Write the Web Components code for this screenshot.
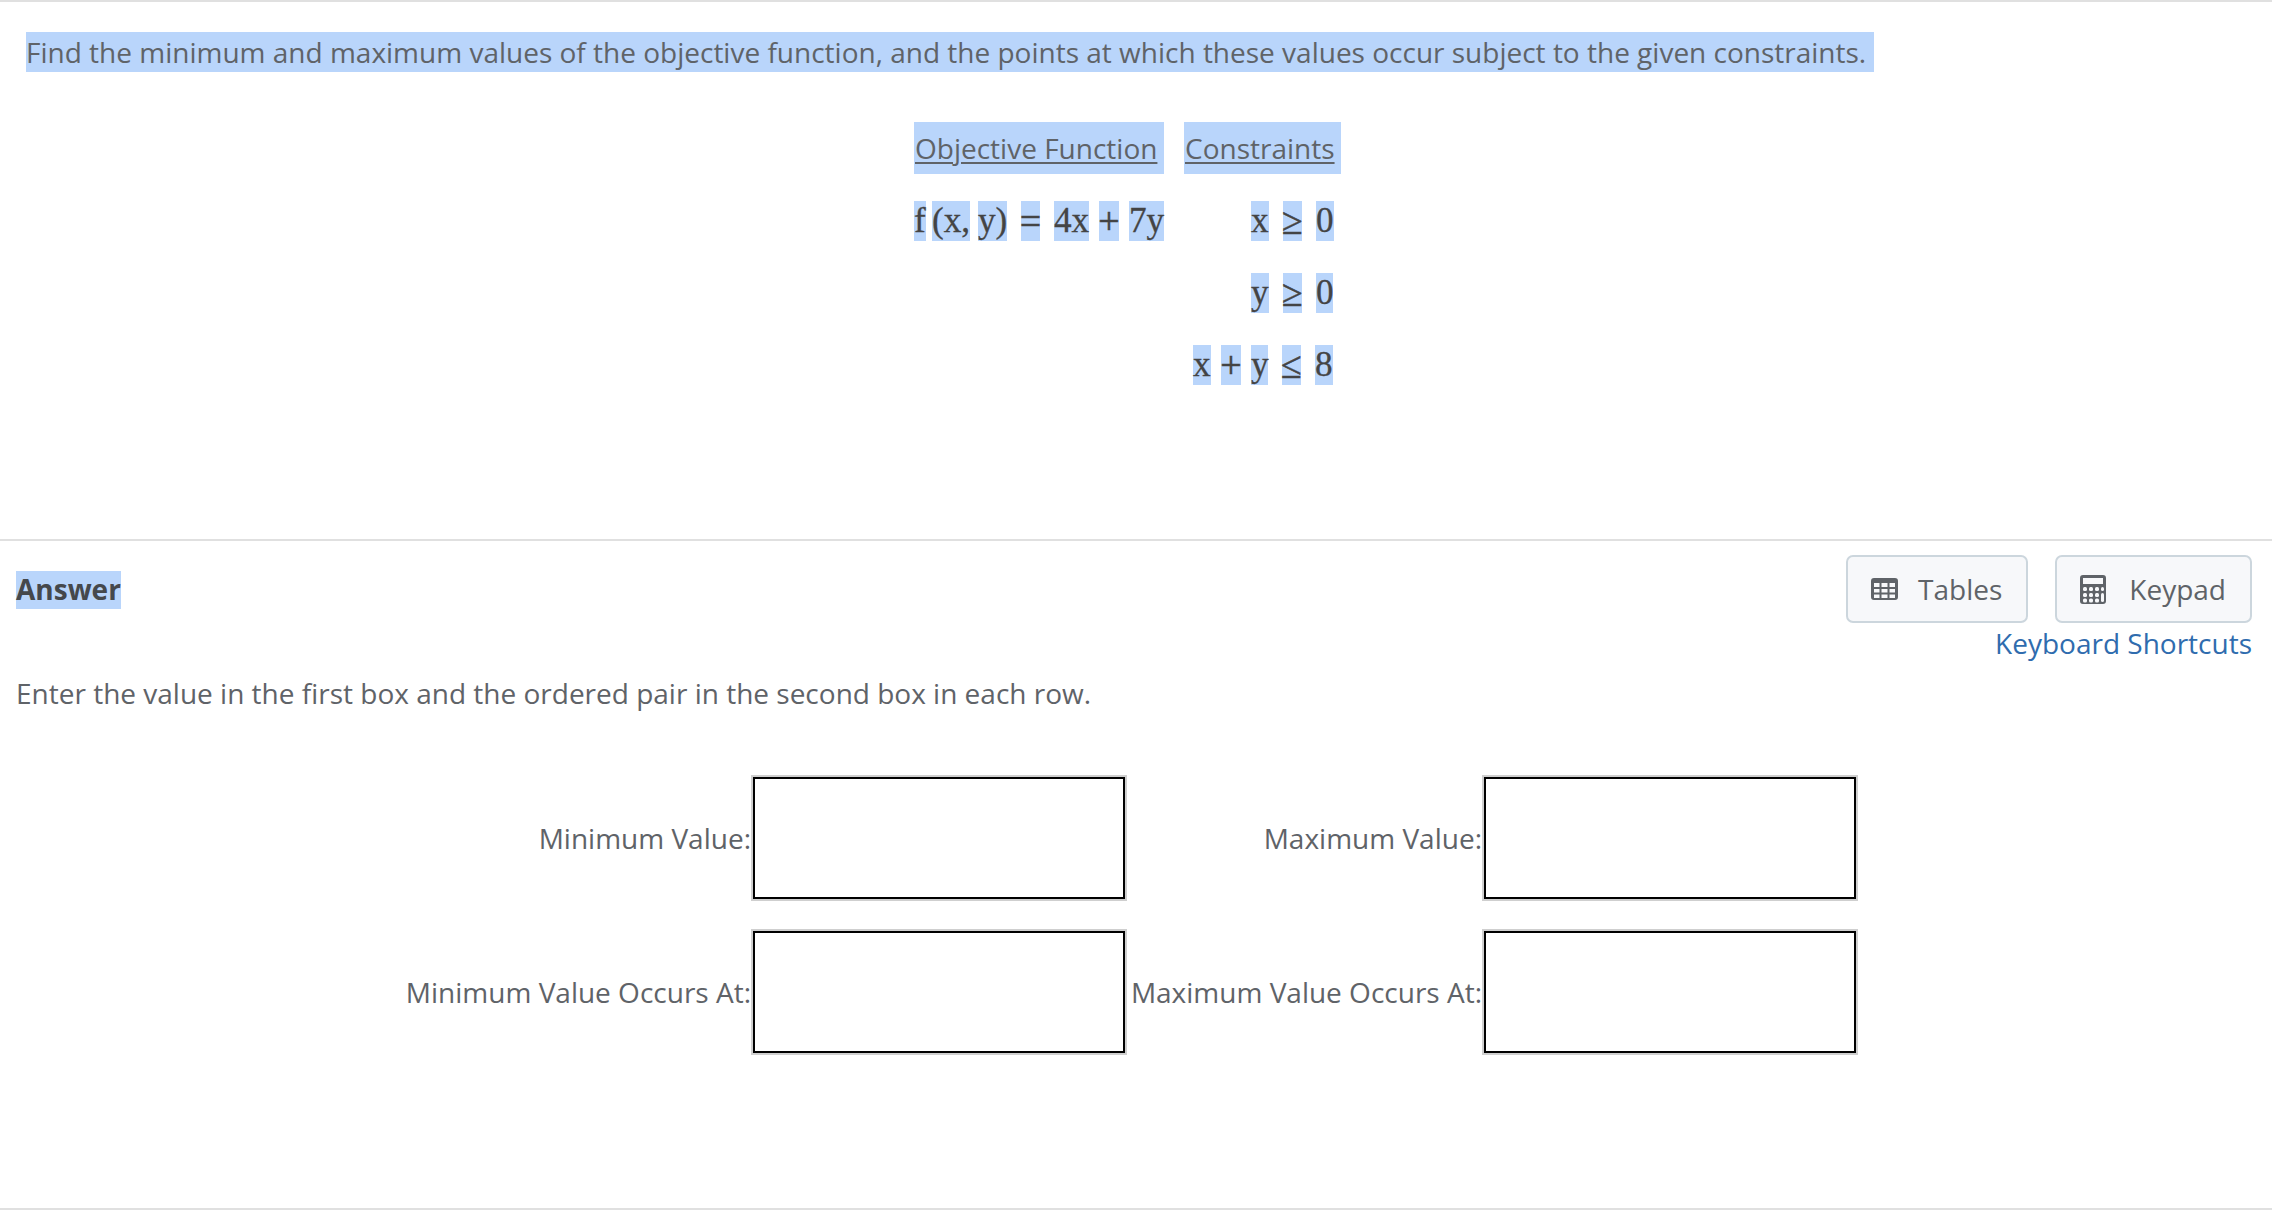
<!DOCTYPE html>
<html lang="en">
<head>
<meta charset="utf-8">
<title>Objective function</title>
<style>
  html, body { margin: 0; background: #fff; }
  body { font: 28px/40px "Open Sans", sans-serif; color: #5f6368; }
</style>
</head>
<body>
<quiz-page>
  <quiz-section slot="question">
    <sel-text>Find the minimum and maximum values of the objective function, and the points at which these values occur subject to the given constraints.&nbsp;</sel-text>
    <math-table>
      <table-head style="width:250px">Objective Function</table-head>
      <table-head style="width:157px">Constraints</table-head>
      <math-row>
        <math-token data-w="12">f</math-token>
        <math-token data-w="38" data-gap="6">(x,</math-token>
        <math-token data-w="29" data-gap="8">y)</math-token>
        <math-token data-w="19" data-gap="14" data-op>=</math-token>
        <math-token data-w="35" data-gap="14">4x</math-token>
        <math-token data-w="20" data-gap="10" data-op>+</math-token>
        <math-token data-w="35" data-gap="10">7y</math-token>
      </math-row>
      <math-row data-col="2">
        <math-token data-w="18" data-gap="67">x</math-token>
        <math-token data-w="19" data-gap="14" data-op>≥</math-token>
        <math-token data-w="18" data-gap="14">0</math-token>
      </math-row>
      <math-row data-col="2" data-row="3">
        <math-token data-w="18" data-gap="67">y</math-token>
        <math-token data-w="19" data-gap="14" data-op>≥</math-token>
        <math-token data-w="17" data-gap="14">0</math-token>
      </math-row>
      <math-row data-col="2" data-row="4">
        <math-token data-w="18" data-gap="9">x</math-token>
        <math-token data-w="20" data-gap="10" data-op>+</math-token>
        <math-token data-w="17" data-gap="10">y</math-token>
        <math-token data-w="19" data-gap="14" data-op>≤</math-token>
        <math-token data-w="18" data-gap="14">8</math-token>
      </math-row>
    </math-table>
  </quiz-section>

  <answer-section>
    <answer-bar>
      <sel-text slot="title" data-bold>Answer</sel-text>
      <tool-button data-gap="20">
        <svg slot="icon" width="27" height="22" viewBox="0 0 27 22"><path fill="#5f6368" fill-rule="evenodd" d="M3 0h21a3 3 0 0 1 3 3v16a3 3 0 0 1-3 3H3a3 3 0 0 1-3-3V3a3 3 0 0 1 3-3zM3 5v4h5.500V5zM10.500 5v4h6V5zM18.500 5v4h5.500V5zM3 11v3.500h5.500V11zM10.500 11v3.500h6V11zM18.500 11v3.500h5.500V11zM3 16.500V20h5.500v-3.500zM10.500 16.500V20h6v-3.500zM18.500 16.500V20h5.500v-3.500z"/></svg>
        Tables
      </tool-button>
      <tool-button data-gap="23">
        <svg slot="icon" width="26" height="29" viewBox="0 0 26 29"><path fill="#5f6368" fill-rule="evenodd" d="M3 0h20a3 3 0 0 1 3 3v23a3 3 0 0 1-3 3H3a3 3 0 0 1-3-3V3a3 3 0 0 1 3-3zM3 3v6h20V3z"/><g fill="#f7f8fa"><rect x="3" y="12" width="4" height="4" rx="1.500"/><rect x="9" y="12" width="4" height="4" rx="1.500"/><rect x="15" y="12" width="4" height="4" rx="1.500"/><rect x="21" y="12" width="3" height="4" rx="1.500"/><rect x="3" y="18" width="4" height="4" rx="1.500"/><rect x="9" y="18" width="4" height="4" rx="1.500"/><rect x="15" y="18" width="4" height="4" rx="1.500"/><rect x="21" y="18" width="3" height="9" rx="1.500"/><rect x="3" y="23.500" width="4" height="4" rx="1.500"/><rect x="9" y="23.500" width="4" height="4" rx="1.500"/><rect x="15" y="23.500" width="4" height="4" rx="1.500"/></g></svg>
        Keypad
      </tool-button>
      <a slot="link" href="#">Keyboard Shortcuts</a>
    </answer-bar>
    <answer-note>Enter the value in the first box and the ordered pair in the second box in each row.</answer-note>
    <answer-grid>
      <answer-field data-label="Minimum Value:"></answer-field>
      <answer-field data-label="Maximum Value:"></answer-field>
      <answer-field data-label="Minimum Value Occurs At:"></answer-field>
      <answer-field data-label="Maximum Value Occurs At:"></answer-field>
    </answer-grid>
  </answer-section>
</quiz-page>

<script>
const define = (name, css, html, setup) => {
  customElements.define(name, class extends HTMLElement {
    constructor() {
      super()
      this.attachShadow({ mode: 'open' }).innerHTML = `<style>${css}</style>${html}`
    }
    connectedCallback() {
      if (setup) setup(this)
    }
  })
}

define('quiz-page', `
  :host { display: flex; flex-direction: column; height: 1210px; box-sizing: border-box;
    border-top: 2px solid #e0e0e0; border-bottom: 2px solid #e0e0e0; }
`, `<slot name="question"></slot><slot></slot>`)

define('quiz-section', `
  :host { display: block; height: 537px; box-sizing: border-box; padding: 30px 0 0 26px; }
`, `<slot></slot>`)

define('sel-text', `
  :host { display: inline-block; background: #b9d5fb; line-height: 40px; white-space: pre-wrap; }
  :host([data-bold]) { font-weight: 700; color: #45484c; line-height: 36px; padding-bottom: 2px; }
`, `<slot></slot>`)

define('math-table', `
  :host { display: grid; grid-template-columns: 250px 157px; column-gap: 20px;
    grid-template-rows: 79px 72px 72px 40px; align-items: start; margin: 50px 0 0 888px; }
`, `<slot></slot>`)

define('table-head', `
  :host { display: block; box-sizing: border-box; height: 52px; line-height: 52px; padding-left: 1px;
    background: #b9d5fb; text-decoration: underline; text-decoration-thickness: 2px;
    text-underline-offset: 3px; white-space: nowrap; }
`, `<slot></slot>`)

define('math-row', `
  :host { display: flex; height: 40px; grid-row: 2; grid-column: 1; }
  :host([data-col="2"]) { grid-column: 2; }
  :host([data-row="3"]) { grid-row: 3; }
  :host([data-row="4"]) { grid-row: 4; }
`, `<slot></slot>`)

define('math-token', `
  :host { display: flex; justify-content: flex-start; height: 40px; background: #b9d5fb; color: #444;
    font: 35.2px/40px "Liberation Serif", serif; white-space: nowrap; -webkit-text-stroke: 0.3px #444; }
  :host([data-op]) { justify-content: center; font-size: 38px; -webkit-text-stroke: 0.5px #444; }
`, `<slot></slot>`, el => {
  el.style.width = `${el.dataset.w}px`
  if (el.dataset.gap) el.style.marginLeft = `${el.dataset.gap}px`
})

define('answer-section', `
  :host { display: block; flex: 1; border-top: 2px solid #e0e0e0; }
`, `<slot></slot>`)

define('answer-bar', `
  :host { display: flex; justify-content: space-between; padding: 14px 20px 0 16px; }
  .title { display: flex; align-items: flex-start; padding-top: 16px; }
  .tools { display: flex; flex-direction: column; align-items: flex-end; }
  .buttons { display: flex; gap: 27px; }
  ::slotted(a) { color: #2f6cae; text-decoration: none; line-height: 40px; }
  .link { display: block; height: 40px; margin-bottom: 1px; }
`, `
  <div class="title"><slot name="title"></slot></div>
  <div class="tools">
    <div class="buttons"><slot></slot></div>
    <div class="link"><slot name="link"></slot></div>
  </div>
`)

define('tool-button', `
  :host { display: flex; align-items: center; box-sizing: border-box; height: 68px; padding: 0 24px 0 23px;
    background: #f7f8fa; border: 2px solid #ccd6dd; border-radius: 7px; }
  .icon { display: flex; margin-right: var(--icon-gap); }
`, `<span class="icon"><slot name="icon"></slot></span><slot></slot>`, el => {
  el.style.setProperty('--icon-gap', `${el.dataset.gap}px`)
})

define('answer-note', `
  :host { display: block; margin: 9px 0 0 16px; height: 40px; }
`, `<slot></slot>`)

define('answer-grid', `
  :host { display: grid; grid-template-columns: 721px 731px; row-gap: 28px; margin: 62px 0 0 406px; }
`, `<slot></slot>`)

define('answer-field', `
  :host { display: flex; align-items: center; justify-content: flex-end; white-space: nowrap; }
  .box { flex: none; box-sizing: content-box; width: 368px; height: 118px; margin: 2px;
    background: #fff; border: 2px solid #000; outline: 2px solid #cfcfcf; }
`, `<span class="label"></span><div class="box"></div>`, el => {
  el.shadowRoot.querySelector('.label').textContent = el.dataset.label
})
</script>
</body>
</html>
